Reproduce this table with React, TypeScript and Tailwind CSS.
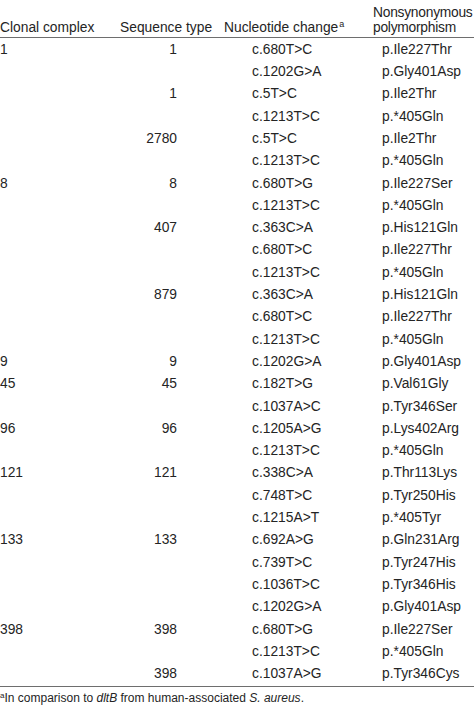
const ROWS: [string, string, string, string][] = [
  ['1', '1', 'c.680T>C', 'p.Ile227Thr'],
  ['', '', 'c.1202G>A', 'p.Gly401Asp'],
  ['', '1', 'c.5T>C', 'p.Ile2Thr'],
  ['', '', 'c.1213T>C', 'p.*405Gln'],
  ['', '2780', 'c.5T>C', 'p.Ile2Thr'],
  ['', '', 'c.1213T>C', 'p.*405Gln'],
  ['8', '8', 'c.680T>G', 'p.Ile227Ser'],
  ['', '', 'c.1213T>C', 'p.*405Gln'],
  ['', '407', 'c.363C>A', 'p.His121Gln'],
  ['', '', 'c.680T>C', 'p.Ile227Thr'],
  ['', '', 'c.1213T>C', 'p.*405Gln'],
  ['', '879', 'c.363C>A', 'p.His121Gln'],
  ['', '', 'c.680T>C', 'p.Ile227Thr'],
  ['', '', 'c.1213T>C', 'p.*405Gln'],
  ['9', '9', 'c.1202G>A', 'p.Gly401Asp'],
  ['45', '45', 'c.182T>G', 'p.Val61Gly'],
  ['', '', 'c.1037A>C', 'p.Tyr346Ser'],
  ['96', '96', 'c.1205A>G', 'p.Lys402Arg'],
  ['', '', 'c.1213T>C', 'p.*405Gln'],
  ['121', '121', 'c.338C>A', 'p.Thr113Lys'],
  ['', '', 'c.748T>C', 'p.Tyr250His'],
  ['', '', 'c.1215A>T', 'p.*405Tyr'],
  ['133', '133', 'c.692A>G', 'p.Gln231Arg'],
  ['', '', 'c.739T>C', 'p.Tyr247His'],
  ['', '', 'c.1036T>C', 'p.Tyr346His'],
  ['', '', 'c.1202G>A', 'p.Gly401Asp'],
  ['398', '398', 'c.680T>G', 'p.Ile227Ser'],
  ['', '', 'c.1213T>C', 'p.*405Gln'],
  ['', '398', 'c.1037A>G', 'p.Tyr346Cys'],
];

export default function App() {
  return (
    <div className="h-[707px] w-[474px] overflow-hidden bg-white font-['Liberation_Sans',Arial,sans-serif] text-[13.8px] text-[#242424]">
      {/* header */}
      <div className="grid h-[37px] grid-cols-[120px_104px_149px_1fr] items-end pb-[2.5px] leading-[15px] whitespace-nowrap">
        <div>Clonal complex</div>
        <div>Sequence type</div>
        <div>
          Nucleotide change<sup className="ml-[1px] text-[9px]">a</sup>
        </div>
        <div className="tracking-[-0.25px]">
          Nonsynonymous
          <br />
          polymorphism
        </div>
      </div>

      <div className="border-y border-[#6e6e6e] pt-[1px]">
        {ROWS.map(([cc, st, nuc, poly], i) => (
          <div key={i} className="grid h-[22.3px] grid-cols-[120px_104px_149px_1fr] items-center whitespace-nowrap">
            <div>{cc}</div>
            <div className="pr-[47px] text-right">{st}</div>
            <div className="pl-[28px]">{nuc}</div>
            <div className="pl-[9px]">{poly}</div>
          </div>
        ))}
      </div>

      <p className="pt-[4px] text-[12px] leading-[14px] whitespace-nowrap">
        <sup className="text-[8px]">a</sup>In comparison to <i>dltB</i> from human-associated <i>S. aureus</i>.
      </p>
    </div>
  );
}
